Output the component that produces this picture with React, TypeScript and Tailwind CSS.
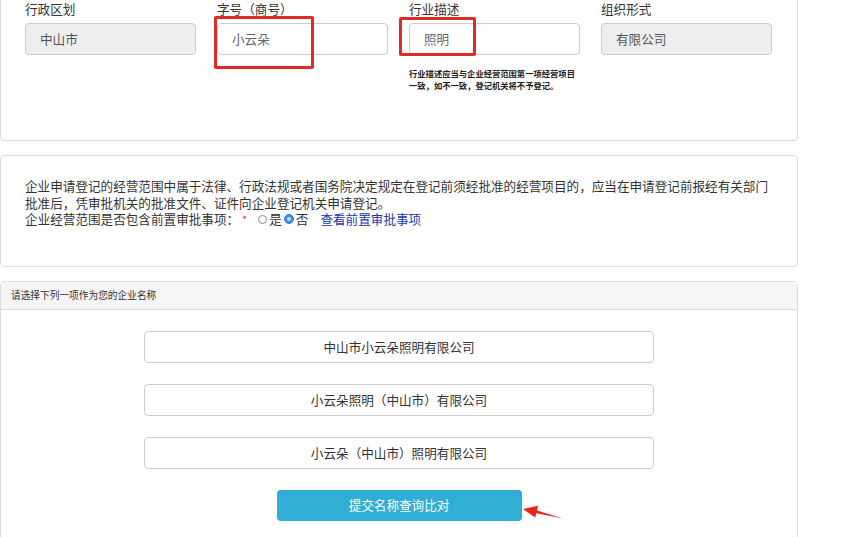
import React from "react";

const FONT = { fontFamily: '"Microsoft YaHei", "Noto Sans CJK SC", "Noto Sans", sans-serif' };

const FIELDS = [
  { label: "行政区划", value: "中山市", disabled: true },
  { label: "字号（商号）", value: "小云朵", disabled: false },
  { label: "行业描述", value: "照明", disabled: false },
  { label: "组织形式", value: "有限公司", disabled: true },
];

const NAMES = ["中山市小云朵照明有限公司", "小云朵照明（中山市）有限公司", "小云朵（中山市）照明有限公司"];

function Radio({ checked }: { checked?: boolean }) {
  return checked ? (
    <span className="inline-flex w-[10px] h-[10px] rounded-full bg-[#3d8ee8] border border-[#2f7fd8] items-center justify-center mx-[2px]">
      <span className="w-[4px] h-[4px] rounded-full bg-white/70" />
    </span>
  ) : (
    <span className="inline-block w-[9px] h-[9px] rounded-full border border-[#8a8a8a] bg-white mx-[2px]" />
  );
}

export default function App() {
  return (
    <div className="w-[866px] h-[537px] overflow-hidden bg-white text-[#333] relative" style={FONT}>
      {/* Basic info panel (top cut off) */}
      <div className="w-[798px] h-[141px] border border-t-0 border-[#ddd] rounded-b-[4px] pl-[24px] relative">
        <div className="grid grid-cols-[171px_171px_171px_171px] gap-x-[21px]">
          {FIELDS.map((f) => (
            <div key={f.label} className="flex flex-col">
              <label className="text-[12.6px] leading-[18px] h-[18px]">{f.label}</label>
              <div
                className={`mt-[5px] h-[32px] rounded-[4px] border border-[#ccc] flex items-center pl-[14px] text-[12.6px] text-[#555] ${
                  f.disabled ? "bg-[#eee]" : "bg-white text-[#666]"
                }`}
              >
                {f.value}
              </div>
              {f.label === "行业描述" && (
                <p className="mt-[12px] text-[8.3px] leading-[12px] font-bold text-[#222] whitespace-nowrap">
                  行业描述应当与企业经营范围第一项经营项目
                  <br />
                  一致，如不一致，登记机关将不予登记。
                </p>
              )}
            </div>
          ))}
        </div>

        {/* annotation boxes */}
        <div className="absolute left-[213px] top-[16px] w-[100px] h-[53px] border-[3px] border-[#dd2b27] rounded-[2px]" />
        <div className="absolute left-[398px] top-[17px] w-[77px] h-[39px] border-[3px] border-[#dd2b27] rounded-[2px]" />
      </div>

      {/* Pre-approval notice */}
      <div className="w-[798px] h-[112px] mt-[14px] border border-[#ddd] rounded-[4px] pl-[24px] pt-[22px] text-[12.6px] leading-[16.5px]">
        <p className="whitespace-nowrap">
          企业申请登记的经营范围中属于法律、行政法规或者国务院决定规定在登记前须经批准的经营项目的，应当在申请登记前报经有关部门
          <br />
          批准后，凭审批机关的批准文件、证件向企业登记机关申请登记。
        </p>
        <div className="flex items-center whitespace-nowrap">
          <span>企业经营范围是否包含前置审批事项：</span>
          <span className="text-[#e33] ml-[3px] mr-[9px] text-[11px]">*</span>
          <Radio />
          <span>是</span>
          <Radio checked />
          <span>否</span>
          <a className="ml-[12px] text-[#2436b0]">查看前置审批事项</a>
        </div>
      </div>

      {/* Name selection */}
      <div className="w-[798px] h-[300px] mt-[14px] border border-[#ddd] rounded-t-[4px]">
        <div className="h-[28px] bg-[#f5f5f5] border-b border-[#ddd] pl-[10px] flex items-center text-[9.7px] text-[#333]">
          请选择下列一项作为您的企业名称
        </div>
        <div className="flex flex-col items-center pt-[21px] gap-[21px]">
          {NAMES.map((n) => (
            <div
              key={n}
              className="w-[510px] h-[32px] border border-[#ccc] rounded-[4px] flex items-center justify-center text-[12.6px] text-[#333]"
            >
              {n}
            </div>
          ))}
          <button className="w-[245px] h-[31px] rounded-[4px] bg-[#30aed5] text-white text-[12.6px] flex items-center justify-center">
            提交名称查询比对
          </button>
        </div>
      </div>

      {/* red arrow annotation */}
      <svg className="absolute left-[520px] top-[502px]" width="46" height="20" viewBox="0 0 46 20">
        <polygon points="3,7 18,3.8 17,8.6 43,16.5 16.3,11.2 15.2,15.5" fill="#e8231c" />
      </svg>
    </div>
  );
}
